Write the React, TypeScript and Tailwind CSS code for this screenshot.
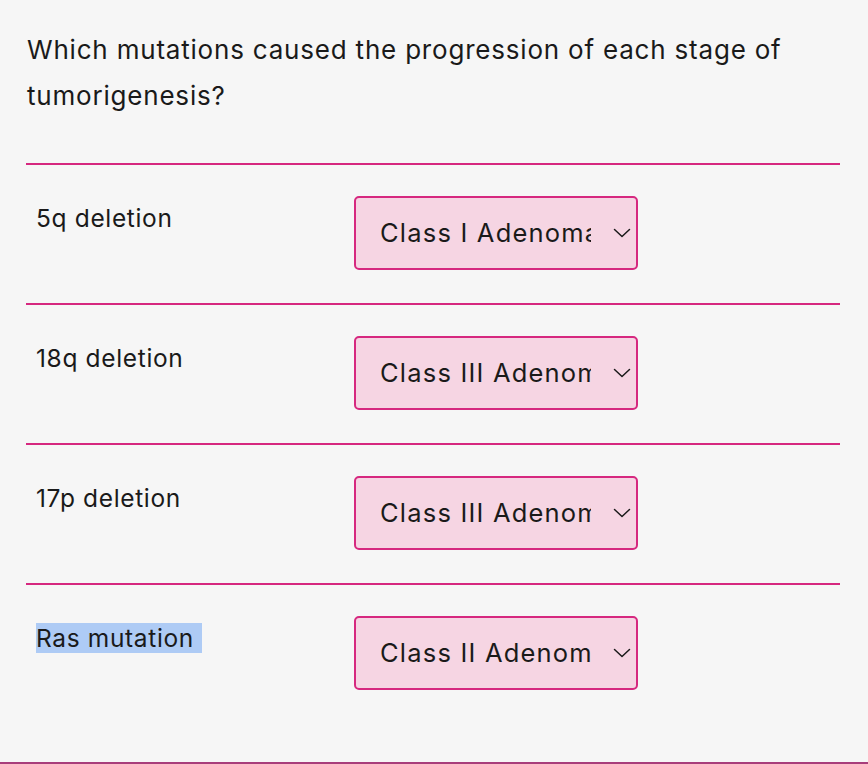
import { useState } from "react";

interface Row {
  id: string;
  label: string;
  value: string;
  highlighted?: boolean;
}

const options = ["Class I Adenoma", "Class II Adenoma", "Class III Adenoma", "Carcinoma"];

const rows: Row[] = [
  { id: "5q", label: "5q deletion", value: "Class I Adenoma" },
  { id: "18q", label: "18q deletion", value: "Class III Adenoma" },
  { id: "17p", label: "17p deletion", value: "Class III Adenoma" },
  { id: "ras", label: "Ras mutation", value: "Class II Adenoma", highlighted: true },
];

const Chevron = () => (
  <svg className="w-[18px] h-[10px]" viewBox="0 0 18 10" fill="none" stroke="#1a1a1a" strokeWidth={1.5} strokeLinecap="round" strokeLinejoin="round">
    <path d="M1.5 1.5l7.5 7 7.5-7" />
  </svg>
);

const MatchRow = ({ row }: { row: Row }) => {
  const [value, setValue] = useState(row.value);

  return (
    <div className="flex items-start border-t-2 border-[#d6287f] pt-[31px] pb-[33px]">
      <div className="w-[328px] pl-[10px] text-[24.5px] tracking-[0.65px] leading-[44px] text-[#1a1a1a]">
        <span className={row.highlighted ? "bg-[#aecbf5] pr-[8px]" : ""}>{row.label}</span>
      </div>
      <div className="relative w-[284px] h-[74px]">
        <select
          value={value}
          onChange={(e) => setValue(e.target.value)}
          className="appearance-none w-full h-full rounded-[5px] border-2 border-[#d6287f] bg-[#f6d5e3] pl-[24px] pr-[45px] text-[25.5px] tracking-[1.2px] text-[#1a1a1a] outline-none"
          style={{ fontFamily: "inherit" }}
        >
          {options.map((o) => (
            <option key={o} value={o}>
              {o}
            </option>
          ))}
        </select>
        <div className="pointer-events-none absolute right-[7px] top-1/2 -translate-y-1/2 flex">
          <Chevron />
        </div>
      </div>
    </div>
  );
};

export default function App() {
  return (
    <div
      className="min-h-[764px] bg-[#f6f6f6] border-b-2 border-[#a83d7b]"
      style={{ fontFamily: "Inter, 'Open Sans', sans-serif" }}
    >
      <h1 className="px-[27px] pt-[27px] text-[26px] tracking-[0.8px] leading-[46px] font-normal text-[#1a1a1a]">
        Which mutations caused the progression of each stage of tumorigenesis?
      </h1>
      <div className="ml-[26px] mr-[28px] mt-[44px]">
        {rows.map((row) => (
          <MatchRow key={row.id} row={row} />
        ))}
      </div>
    </div>
  );
}
